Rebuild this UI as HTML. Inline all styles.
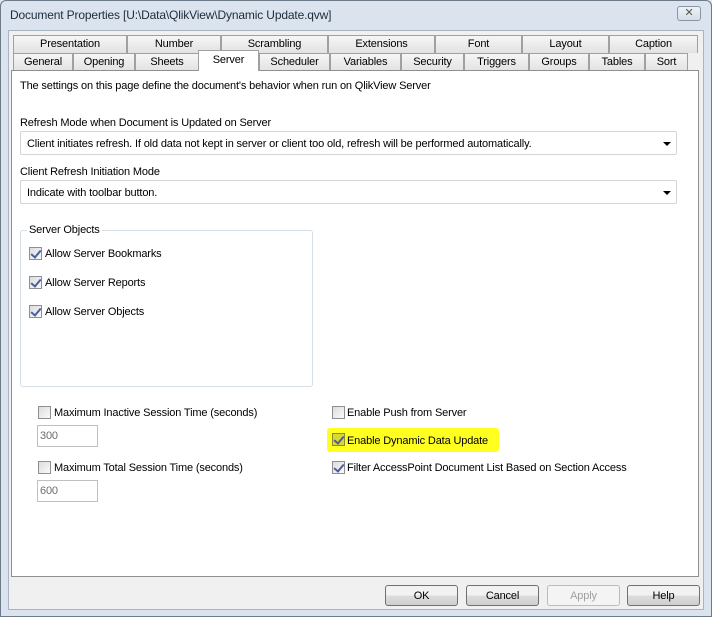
<!DOCTYPE html>
<html><head><style>
*{box-sizing:border-box;margin:0;padding:0}
body{width:712px;height:617px;background:#dfe7f0;font-family:"Liberation Sans",sans-serif;font-size:11px;color:#000;position:relative;overflow:hidden;letter-spacing:-0.15px}
.a{position:absolute}
.win{left:0;top:0;width:712px;height:617px;border:1px solid #6c7a8a;border-radius:6px 6px 0 0;background:#dbe4ee}
.client{left:8px;top:30px;width:696px;height:580px;background:#f0f0f0;border:1px solid #a8b4c0}
.tab{position:absolute;height:18px;border:1px solid #a0a0a0;border-bottom:none;background:linear-gradient(#f6f6f6,#e2e2e2);text-align:center;line-height:17px;font-size:11px}
.panel{left:11px;top:70px;width:688px;height:507px;background:#fff;border:1px solid #8e8f8f}
.dd{position:absolute;height:24px;border:1px solid #d5d5d5;border-radius:2px;background:#fff;padding-left:6px;line-height:24px;font-size:11px}
.dd:after{content:"";position:absolute;right:5px;top:10px;border-left:4px solid transparent;border-right:4px solid transparent;border-top:4px solid #000}
.cb{position:absolute;width:13px;height:13px;border:1px solid #8e8f8f;background:linear-gradient(135deg,#dcdcdc,#fafafa)}
.cb.c:after{content:"";position:absolute;left:3px;top:0px;width:4px;height:8px;border:solid #4a5fa0;border-width:0 2px 2px 0;transform:rotate(40deg)}
.lbl{position:absolute;font-size:11px;white-space:nowrap;margin-top:1px}
.btn{position:absolute;top:585px;width:73px;height:21px;border:1px solid #707070;border-radius:3px;background:linear-gradient(#f2f2f2 50%,#dddddd 50%,#cfcfcf);text-align:center;line-height:21px;font-size:11px}
.inp{position:absolute;width:61px;height:22px;border:1px solid #c0c0c0;background:#fff;color:#6d6d6d;padding-left:2px;line-height:20px}
</style></head><body>
<div class="a win"></div>
<div class="a" style="left:10px;top:8px;font-size:12px;color:#1e2b3a">Document Properties [U:\Data\QlikView\Dynamic Update.qvw]</div>
<div class="a" style="left:677px;top:6px;width:24px;height:15px;border:1px solid #8a95a3;border-radius:3px;background:linear-gradient(#eef2f6,#d6dde6);text-align:center;font-size:11px;line-height:12px;color:#555">✕</div>
<div class="a client"></div>

<div class="tab" style="left:13px;top:35px;width:114px">Presentation</div>
<div class="tab" style="left:127px;top:35px;width:94px">Number</div>
<div class="tab" style="left:221px;top:35px;width:107px">Scrambling</div>
<div class="tab" style="left:328px;top:35px;width:107px">Extensions</div>
<div class="tab" style="left:435px;top:35px;width:87px">Font</div>
<div class="tab" style="left:522px;top:35px;width:87px">Layout</div>
<div class="tab" style="left:609px;top:35px;width:89px">Caption</div>

<div class="tab" style="left:13px;top:53px;width:60px">General</div>
<div class="tab" style="left:73px;top:53px;width:62px">Opening</div>
<div class="tab" style="left:135px;top:53px;width:64px">Sheets</div>
<div class="tab" style="left:259px;top:53px;width:71px">Scheduler</div>
<div class="tab" style="left:330px;top:53px;width:71px">Variables</div>
<div class="tab" style="left:401px;top:53px;width:63px">Security</div>
<div class="tab" style="left:464px;top:53px;width:65px">Triggers</div>
<div class="tab" style="left:529px;top:53px;width:60px">Groups</div>
<div class="tab" style="left:589px;top:53px;width:56px">Tables</div>
<div class="tab" style="left:645px;top:53px;width:43px">Sort</div>

<div class="a panel"></div>
<div class="tab" style="left:198px;top:50px;width:61px;height:21px;background:#fff;line-height:18px;z-index:2">Server</div>

<div class="lbl" style="left:20px;top:79px">The settings on this page define the document's behavior when run on QlikView Server</div>
<div class="lbl" style="left:20px;top:116px">Refresh Mode when Document is Updated on Server</div>
<div class="dd" style="left:20px;top:131px;width:657px">Client initiates refresh. If old data not kept in server or client too old, refresh will be performed automatically.</div>
<div class="lbl" style="left:20px;top:165px">Client Refresh Initiation Mode</div>
<div class="dd" style="left:20px;top:180px;width:657px">Indicate with toolbar button.</div>

<div class="a" style="left:20px;top:230px;width:293px;height:157px;border:1px solid #d5dfe5;border-radius:3px"></div>
<div class="lbl" style="left:27px;top:223px;background:#fff;padding:0 2px">Server Objects</div>
<div class="cb c" style="left:29px;top:247px"></div><div class="lbl" style="left:45px;top:247px">Allow Server Bookmarks</div>
<div class="cb c" style="left:29px;top:276px"></div><div class="lbl" style="left:45px;top:276px">Allow Server Reports</div>
<div class="cb c" style="left:29px;top:305px"></div><div class="lbl" style="left:45px;top:305px">Allow Server Objects</div>

<div class="cb" style="left:38px;top:406px"></div><div class="lbl" style="left:54px;top:406px">Maximum Inactive Session Time (seconds)</div>
<div class="inp" style="left:37px;top:425px">300</div>
<div class="cb" style="left:38px;top:461px"></div><div class="lbl" style="left:54px;top:461px">Maximum Total Session Time (seconds)</div>
<div class="inp" style="left:37px;top:480px">600</div>

<div class="cb" style="left:332px;top:406px"></div><div class="lbl" style="left:347px;top:406px">Enable Push from Server</div>
<div class="a" style="left:327px;top:428px;width:172px;height:24px;background:#ffff22;border-radius:3px"></div>
<div class="cb c" style="left:332px;top:433px;background:#d8d830;border-color:#8a8a30"></div><div class="lbl" style="left:347px;top:434px">Enable Dynamic Data Update</div>
<div class="cb c" style="left:332px;top:461px"></div><div class="lbl" style="left:347px;top:461px">Filter AccessPoint Document List Based on Section Access</div>

<div class="btn" style="left:385px">OK</div>
<div class="btn" style="left:466px">Cancel</div>
<div class="btn" style="left:547px;color:#a0a0a0;border-color:#bcbcbc;background:#f4f4f4">Apply</div>
<div class="btn" style="left:627px">Help</div>
</body></html>
